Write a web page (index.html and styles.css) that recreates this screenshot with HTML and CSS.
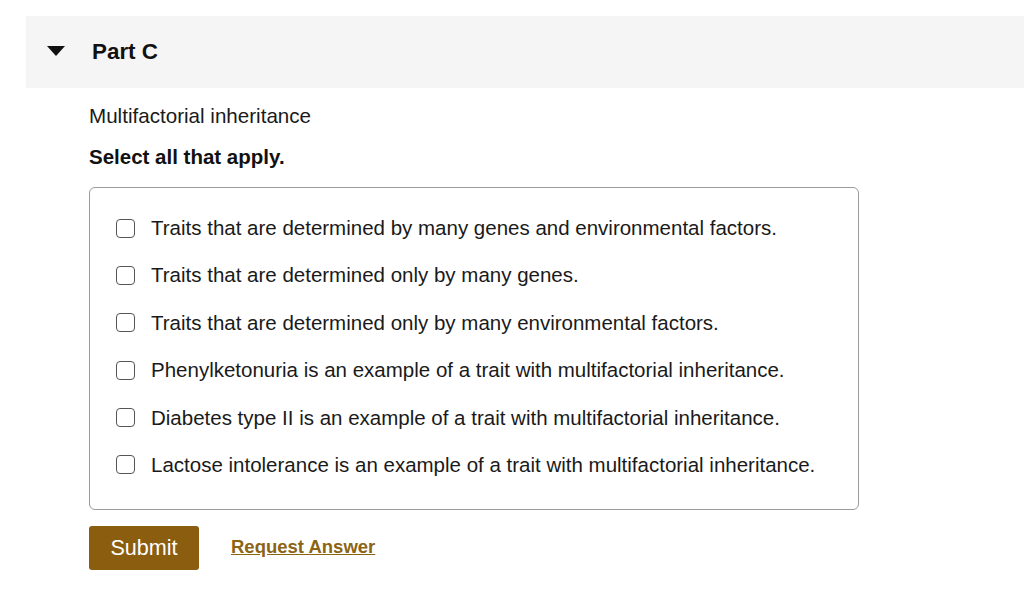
FILE: index.html
```html
<!DOCTYPE html>
<html>
<head>
<meta charset="utf-8">
<link rel="stylesheet" href="styles.css">
</head>
<body>
<div class="page">
  <div class="part-header">
    <svg class="caret" width="18" height="11" viewBox="0 0 18 11"><path d="M0 0 L18 0 L9 10 Z" fill="#111"/></svg>
    <span class="part-title">Part C</span>
  </div>
  <div class="content">
    <p class="prompt">Multifactorial inheritance</p>
    <p class="instr">Select all that apply.</p>
    <div class="options">
      <label class="opt"><span class="box"></span><span>Traits that are determined by many genes and environmental factors.</span></label>
      <label class="opt"><span class="box"></span><span>Traits that are determined only by many genes.</span></label>
      <label class="opt"><span class="box"></span><span>Traits that are determined only by many environmental factors.</span></label>
      <label class="opt"><span class="box"></span><span>Phenylketonuria is an example of a trait with multifactorial inheritance.</span></label>
      <label class="opt"><span class="box"></span><span>Diabetes type II is an example of a trait with multifactorial inheritance.</span></label>
      <label class="opt"><span class="box"></span><span>Lactose intolerance is an example of a trait with multifactorial inheritance.</span></label>
    </div>
    <div class="actions">
      <button class="submit">Submit</button>
      <a class="request" href="#">Request Answer</a>
    </div>
  </div>
</div>
</body>
</html>
```
FILE: styles.css
```css
html, body { margin: 0; padding: 0; background: #fff; }
body { font-family: "Liberation Sans", Arial, sans-serif; color: #1a1a1a; }
.page { padding-top: 16px; padding-left: 26px; }
.part-header {
  background: #f5f5f5;
  height: 72px;
  display: flex;
  align-items: center;
}
.caret { margin-left: 21px; margin-right: 27px; margin-top: -2px; }
.part-title { font-weight: bold; font-size: 22.4px; color: #111; }
.content { padding-left: 63px; }
.prompt { margin: 16px 0 0 0; font-size: 20.6px; line-height: 24px; }
.instr { margin: 17px 0 0 0; font-size: 20.5px; line-height: 24px; font-weight: bold; color: #111; }
.options {
  box-sizing: border-box;
  margin-top: 18px;
  width: 770px;
  border: 1px solid #9a9a9a;
  border-radius: 6px;
  padding: 28px 0 32px 26px;
  display: flex;
  flex-direction: column;
  gap: 23.4px;
}
.opt { display: flex; align-items: center; font-size: 20.5px; line-height: 24px; }
.box {
  width: 17px; height: 17px;
  border: 1.5px solid #555;
  border-radius: 4px;
  margin-right: 16px;
  flex: none;
}
.actions { display: flex; align-items: center; margin-top: 16px; gap: 32px; }
.submit {
  background: #8b5d0f;
  color: #fff;
  border: none;
  border-radius: 3px;
  width: 110px;
  height: 44px;
  font-family: "Liberation Sans", Arial, sans-serif;
  font-size: 21.6px;
  padding: 0;
}
.request { color: #8b6414; font-weight: bold; font-size: 18.5px; text-decoration: underline; margin-top: -2px; }
```
